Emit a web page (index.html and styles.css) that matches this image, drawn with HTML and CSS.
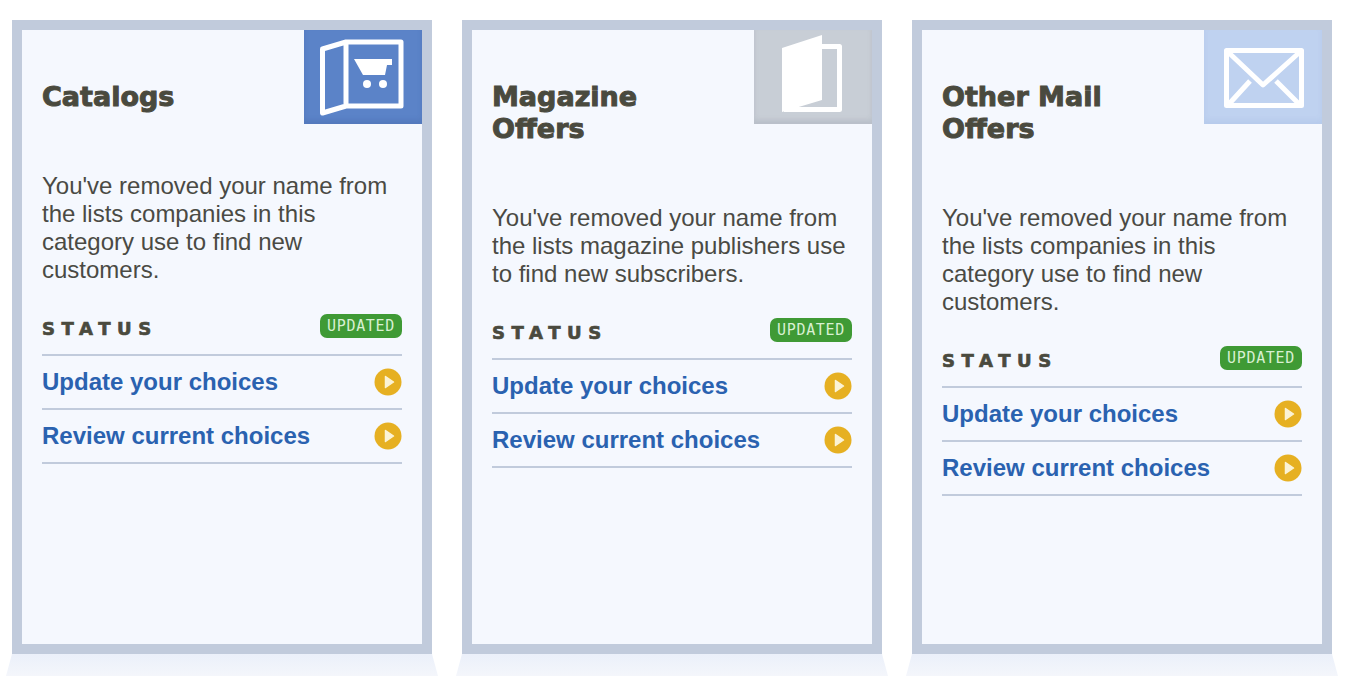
FILE: index.html
```html
<!DOCTYPE html>
<html lang="en">
<head>
<meta charset="utf-8">
<title>Mail preferences</title>
<link rel="stylesheet" href="styles.css">
</head>
<body>
<main class="columns">
  <section class="column">
    <div class="card">
      <div class="card-head">
        <h2 class="title">Catalogs</h2>
        <div class="tile tile-blue">
          <svg class="tile-svg" viewBox="0 0 118 94">
            <path class="line" d="M18.5 19 42 12H97V76H42L18.5 83ZM42 12V76"/>
            <path class="solid" d="M50 29H88V35H83L81 45H59Z"/>
            <circle class="solid" cx="63" cy="54" r="4"/>
            <circle class="solid" cx="79" cy="54" r="4"/>
          </svg>
        </div>
      </div>
      <p class="desc">You've removed your name from<br>the lists companies in this<br>category use to find new<br>customers.</p>
      <div class="status"><span class="status-label">STATUS</span><span class="badge">UPDATED</span></div>
      <a class="row" href="#"><span>Update your choices</span><svg class="go" viewBox="0 0 28 28"><circle class="go-disc" cx="14" cy="14" r="13.5"/><path class="go-arrow" d="M11.5 8.5 19.5 14 11.5 19.5Z"/></svg></a>
      <a class="row" href="#"><span>Review current choices</span><svg class="go" viewBox="0 0 28 28"><circle class="go-disc" cx="14" cy="14" r="13.5"/><path class="go-arrow" d="M11.5 8.5 19.5 14 11.5 19.5Z"/></svg></a>
    </div>
    <div class="reflection"></div>
  </section>

  <section class="column">
    <div class="card">
      <div class="card-head">
        <h2 class="title">Magazine<br>Offers</h2>
        <div class="tile tile-grey">
          <svg class="tile-svg" viewBox="0 0 118 94">
            <path class="line" d="M60 16.5H85.5V79.5H30"/>
            <path class="solid" d="M28 18 68 5V70L28 82Z"/>
          </svg>
        </div>
      </div>
      <p class="desc">You've removed your name from<br>the lists magazine publishers use<br>to find new subscribers.</p>
      <div class="status"><span class="status-label">STATUS</span><span class="badge">UPDATED</span></div>
      <a class="row" href="#"><span>Update your choices</span><svg class="go" viewBox="0 0 28 28"><circle class="go-disc" cx="14" cy="14" r="13.5"/><path class="go-arrow" d="M11.5 8.5 19.5 14 11.5 19.5Z"/></svg></a>
      <a class="row" href="#"><span>Review current choices</span><svg class="go" viewBox="0 0 28 28"><circle class="go-disc" cx="14" cy="14" r="13.5"/><path class="go-arrow" d="M11.5 8.5 19.5 14 11.5 19.5Z"/></svg></a>
    </div>
    <div class="reflection"></div>
  </section>

  <section class="column">
    <div class="card">
      <div class="card-head">
        <h2 class="title">Other Mail<br>Offers</h2>
        <div class="tile tile-pale">
          <svg class="tile-svg" viewBox="0 0 118 94">
            <rect class="line" x="22.5" y="20.5" width="75" height="55"/>
            <path class="line" d="M23 21 59 55 97 21M25 74 46 51M95 74 72 51"/>
          </svg>
        </div>
      </div>
      <p class="desc">You've removed your name from<br>the lists companies in this<br>category use to find new<br>customers.</p>
      <div class="status"><span class="status-label">STATUS</span><span class="badge">UPDATED</span></div>
      <a class="row" href="#"><span>Update your choices</span><svg class="go" viewBox="0 0 28 28"><circle class="go-disc" cx="14" cy="14" r="13.5"/><path class="go-arrow" d="M11.5 8.5 19.5 14 11.5 19.5Z"/></svg></a>
      <a class="row" href="#"><span>Review current choices</span><svg class="go" viewBox="0 0 28 28"><circle class="go-disc" cx="14" cy="14" r="13.5"/><path class="go-arrow" d="M11.5 8.5 19.5 14 11.5 19.5Z"/></svg></a>
    </div>
    <div class="reflection"></div>
  </section>
</main>
</body>
</html>
```
FILE: styles.css
```css
* { box-sizing: border-box; }

html, body { margin: 0; height: 100%; overflow: hidden; background: #fff; }

body { font-family: "Liberation Sans", Arial, sans-serif; color: #4a4a40; }

.columns { display: flex; gap: 30px; padding: 20px 12px 0; }

.column { width: 420px; display: flex; flex-direction: column; }

.card {
  height: 634px;
  border: 10px solid #c1cbdc;
  background: #f5f8fe;
  padding: 0 20px;
}

.reflection {
  height: 22px;
  margin: 0 -6px;
  background: linear-gradient(#ebf0fa, #f4f6fb);
  clip-path: polygon(6px 0, calc(100% - 6px) 0, 100% 100%, 0 100%);
}

.card-head {
  display: flex;
  justify-content: space-between;
  align-items: flex-start;
  margin-right: -20px;
}

.title {
  margin: 51px 0 59px;
  font-family: "DejaVu Sans", sans-serif;
  font-size: 27px;
  line-height: 32px;
  font-weight: 700;
  letter-spacing: 0;
  color: #4a4a3e;
  -webkit-text-stroke: 1px #4a4a3e;
}

.tile { width: 118px; height: 94px; flex: none; }
.tile-blue { background: #5b83c8; box-shadow: inset 0 -4px 5px rgba(50, 80, 140, .18); }
.tile-grey { background: #c8ced6; box-shadow: inset 0 -4px 5px rgba(90, 100, 120, .14); }
.tile-pale { background: #bfd2f0; box-shadow: inset 0 -4px 5px rgba(150, 175, 220, .2); }

.tile-svg { display: block; width: 118px; height: 94px; filter: blur(0.5px); }

.line { fill: none; stroke: #fff; stroke-width: 5; stroke-linejoin: round; }
.solid { fill: #fff; }

.desc {
  margin: 0;
  font-size: 24px;
  line-height: 28px;
  color: #4a4a44;
}

.status {
  display: flex;
  justify-content: space-between;
  align-items: center;
  height: 72px;
  padding-top: 14px;
  border-bottom: 2px solid #c1cbdc;
}

.status-label {
  margin-top: 4px;
  font-family: "DejaVu Sans", sans-serif;
  font-size: 18px;
  font-weight: 700;
  letter-spacing: 6.6px;
  color: #4a4a3e;
  -webkit-text-stroke: 0.7px #4a4a3e;
}

.badge {
  width: 82px;
  height: 24px;
  border-radius: 7px;
  background: #3f9a35;
  color: #d8f0d2;
  font-family: "DejaVu Sans Mono", monospace;
  font-size: 15px;
  line-height: 24px;
  text-align: center;
  letter-spacing: 0.7px;
}

.row {
  display: flex;
  justify-content: space-between;
  align-items: center;
  height: 54px;
  border-bottom: 2px solid #c1cbdc;
  font-size: 24px;
  font-weight: 700;
  color: #2a62b0;
  text-decoration: none;
}

.go { display: block; width: 28px; height: 28px; flex: none; }
.go-disc { fill: #e6b022; }
.go-arrow { fill: #fbf3d6; stroke: #fbf3d6; stroke-width: 1.5; stroke-linejoin: round; }
```
